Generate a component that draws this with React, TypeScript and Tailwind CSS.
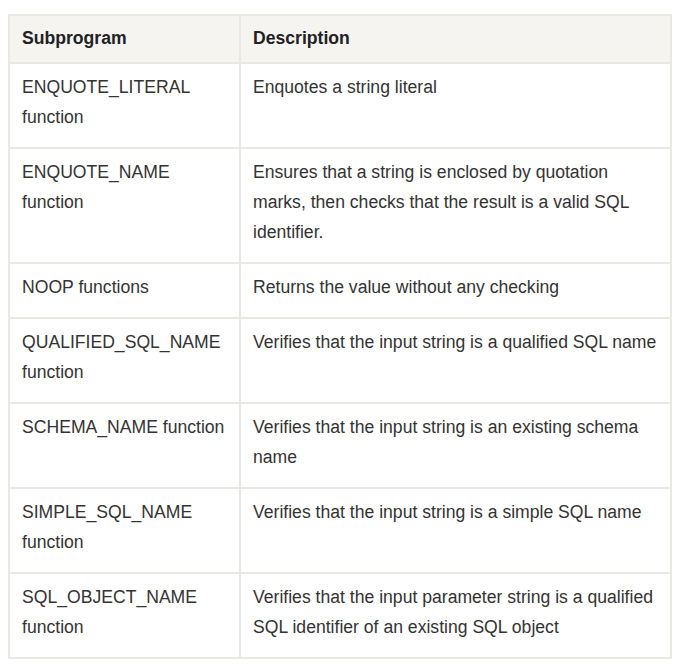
import React from "react";

const rows: [string, string][] = [
  ["ENQUOTE_LITERAL function", "Enquotes a string literal"],
  [
    "ENQUOTE_NAME function",
    "Ensures that a string is enclosed by quotation marks, then checks that the result is a valid SQL identifier.",
  ],
  ["NOOP functions", "Returns the value without any checking"],
  ["QUALIFIED_SQL_NAME function", "Verifies that the input string is a qualified SQL name"],
  ["SCHEMA_NAME function", "Verifies that the input string is an existing schema name"],
  ["SIMPLE_SQL_NAME function", "Verifies that the input string is a simple SQL name"],
  [
    "SQL_OBJECT_NAME function",
    "Verifies that the input parameter string is a qualified SQL identifier of an existing SQL object",
  ],
];

export default function App() {
  return (
    <div
      className="bg-white w-[685px] h-[670px] pt-[14px] pl-[8px]"
      style={{ fontFamily: '"Liberation Sans", Arial, sans-serif' }}
    >
      <table className="w-[664px] table-fixed border-separate border-spacing-0 border-t-2 border-l-2 border-[#e9e8e3] text-[17.6px] text-[#333333]">
        <colgroup>
          <col className="w-[231px]" />
          <col className="w-[431px]" />
        </colgroup>
        <thead>
          <tr className="bg-[#f5f4f0]">
            <th className="text-left font-bold text-[#222222] leading-[24px] pt-[10px] pb-[12px] pl-3 pr-2 border-r-2 border-b-2 border-[#e9e8e3]">
              Subprogram
            </th>
            <th className="text-left font-bold text-[#222222] leading-[24px] pt-[10px] pb-[12px] pl-3 pr-2 border-r-2 border-b-2 border-[#e9e8e3]">
              Description
            </th>
          </tr>
        </thead>
        <tbody>
          {rows.map(([a, b]) => (
            <tr key={a}>
              <td className="align-top leading-[30px] pt-[8px] pb-[15px] pl-3 pr-2 border-r-2 border-b-2 border-[#e9e8e3]">
                {a}
              </td>
              <td className="align-top leading-[30px] pt-[8px] pb-[15px] pl-3 pr-2 border-r-2 border-b-2 border-[#e9e8e3]">
                {b}
              </td>
            </tr>
          ))}
        </tbody>
      </table>
    </div>
  );
}
